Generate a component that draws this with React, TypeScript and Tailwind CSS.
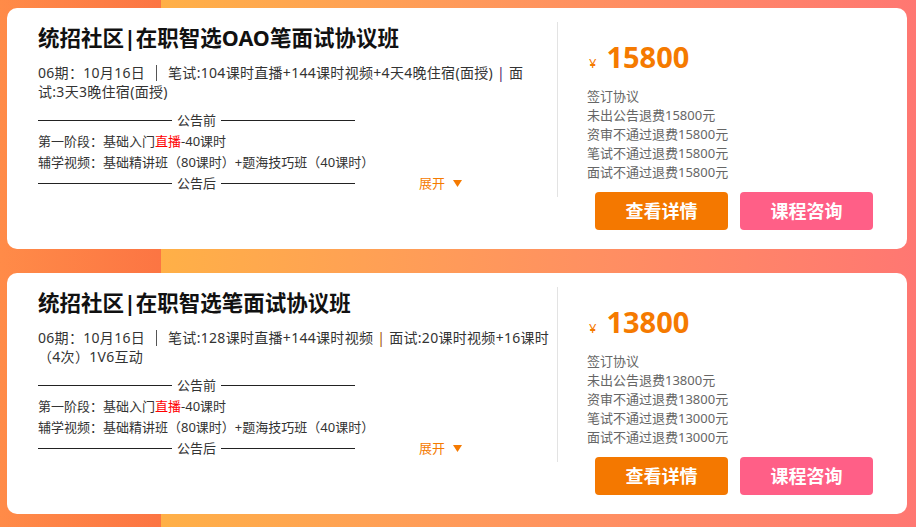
import type { ReactNode } from "react";

type Course = {
  title: string;
  info: ReactNode;
  price: string;
  refunds: string[];
};

const courses: Course[] = [
  {
    title: "统招社区|在职智选OAO笔面试协议班",
    info: (
      <>
        <div className="whitespace-nowrap">
          06期：10月16日
          <span className="inline-block align-[-3px] w-px h-[16px] bg-[#555] mx-[11px]" />
          笔试:104课时直播+144课时视频+4天4晚住宿(面授) <span className="text-[#4b1a6b]">|</span> 面
        </div>
        <div className="whitespace-nowrap">试:3天3晚住宿(面授)</div>
      </>
    ),
    price: "15800",
    refunds: ["未出公告退费15800元", "资审不通过退费15800元", "笔试不通过退费15800元", "面试不通过退费15800元"],
  },
  {
    title: "统招社区|在职智选笔面试协议班",
    info: (
      <>
        <div className="whitespace-nowrap">
          06期：10月16日
          <span className="inline-block align-[-3px] w-px h-[16px] bg-[#555] mx-[11px]" />
          笔试:128课时直播+144课时视频 <span className="text-[#a0520a]">|</span> 面试:20课时视频+16课时
        </div>
        <div className="whitespace-nowrap">（4次）1V6互动</div>
      </>
    ),
    price: "13800",
    refunds: ["未出公告退费13800元", "资审不通过退费13800元", "笔试不通过退费13000元", "面试不通过退费13000元"],
  },
];

function Divider({ label }: { label: string }) {
  return (
    <div className="flex items-center w-[317px] h-[21px]">
      <div className="flex-1 h-px bg-[#222]" />
      <span className="px-[5px] text-[13px] text-[#333]">{label}</span>
      <div className="flex-1 h-px bg-[#222]" />
    </div>
  );
}

function CourseCard({ course }: { course: Course }) {
  return (
    <div className="flex h-[241px] bg-white rounded-[10px]">
      {/* left: title + schedule */}
      <div className="w-[550px] shrink-0 pl-[31px] pt-[15px]">
        <h2 className="text-[21.5px] leading-[30px] font-bold text-[#111]">{course.title}</h2>
        <div className="mt-[10px] text-[14px] leading-[19px] tracking-[0.3px] text-[#333]">{course.info}</div>
        <div className="mt-[9px]">
          <Divider label="公告前" />
          <div className="text-[13px] leading-[21px] text-[#333]">
            第一阶段：基础入门<span className="text-[#ff0000]">直播</span>-40课时
          </div>
          <div className="text-[13px] leading-[21px] text-[#333]">辅学视频：基础精讲班（80课时）+题海技巧班（40课时）</div>
          <div className="flex items-center">
            <Divider label="公告后" />
            <button className="ml-[64px] flex items-center gap-[8px] text-[13px] leading-[21px] text-[#f57a00]">
              展开
              <svg width="9" height="7" viewBox="0 0 9 7">
                <path d="M0 0h9L4.5 7z" fill="#f57a00" />
              </svg>
            </button>
          </div>
        </div>
      </div>

      {/* right: price + refund terms */}
      <div className="flex-1 pt-[14px]">
        <div className="h-[175px] border-l border-[#e3e3e3] pl-[29px] pt-[17px]">
          <div className="flex items-baseline h-[36px] text-[#f57a00]">
            <span className="text-[13px] ml-[2px]">¥</span>
            <span className="ml-[10px] text-[29px] leading-[36px] font-bold">{course.price}</span>
          </div>
          <ul className="mt-[12px] text-[13px] leading-[19px] text-[#666]">
            <li>签订协议</li>
            {course.refunds.map((r) => (
              <li key={r}>{r}</li>
            ))}
          </ul>
        </div>
        <div className="flex gap-[12px] pl-[38px] -mt-[5px]">
          <button className="w-[133px] h-[38px] rounded-[4px] bg-[#f47800] text-white text-[18px] font-bold">查看详情</button>
          <button className="w-[133px] h-[38px] rounded-[4px] bg-[#ff5f87] text-white text-[18px] font-bold">课程咨询</button>
        </div>
      </div>
    </div>
  );
}

export default function App() {
  return (
    <div
      className="w-[916px] h-[527px] overflow-hidden pl-[7px] pr-[9px] pt-[8px] flex flex-col gap-[24px] bg-[linear-gradient(to_right,#ff8b48_0px,#fc7543_161px,#ffb047_161px,#ff9a5a_50%,#ff7772_100%)]"
      style={{ fontFamily: '"Noto Sans", "Noto Sans CJK SC", sans-serif' }}
    >
      {courses.map((c) => (
        <CourseCard key={c.title} course={c} />
      ))}
    </div>
  );
}
